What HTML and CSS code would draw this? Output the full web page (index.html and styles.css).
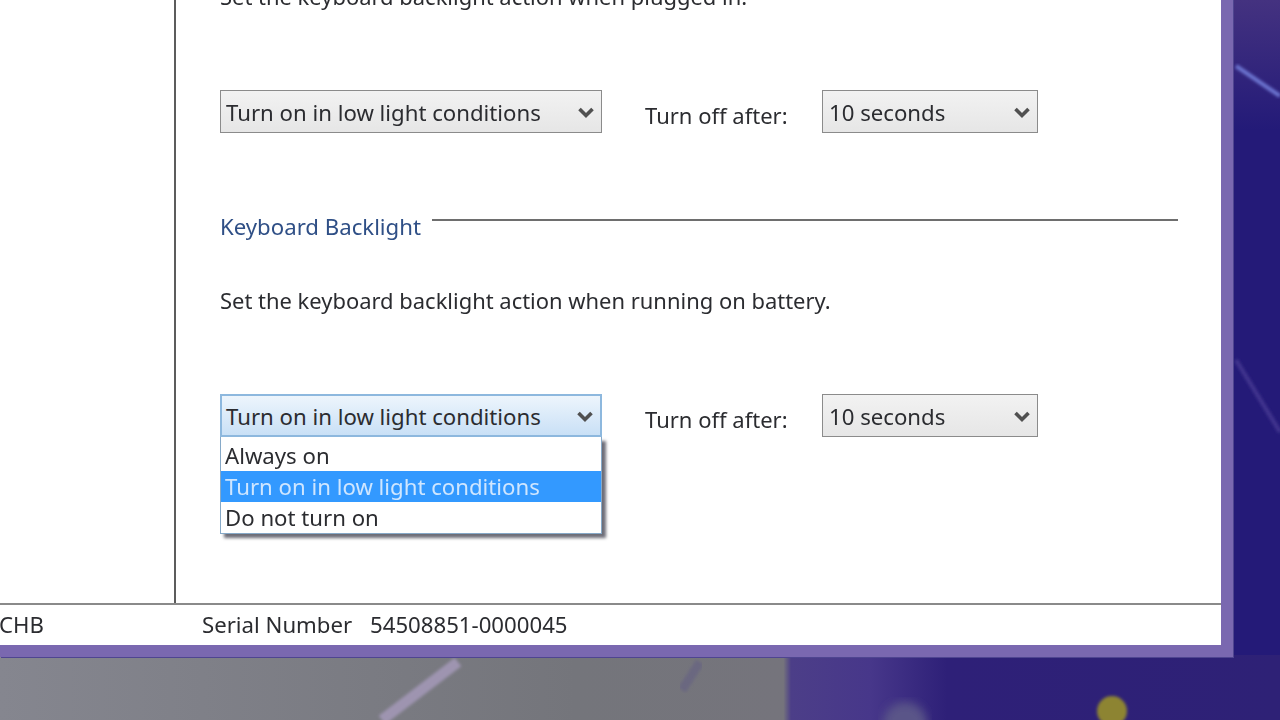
FILE: index.html
```html
<!DOCTYPE html>
<html lang="en">
<head>
<meta charset="utf-8">
<title>Keyboard Backlight</title>
<link rel="stylesheet" href="styles.css">
</head>
<body>
<div class="desktop">
  <svg class="wallpaper" width="1280" height="720" viewBox="0 0 1280 720" aria-hidden="true">
    <defs>
      <linearGradient id="skyFade" x1="0" y1="0" x2="0" y2="1">
        <stop offset="0" stop-color="#443280"/>
        <stop offset="1" stop-color="#231a78"/>
      </linearGradient>
      <linearGradient id="groundFade" x1="0" y1="0" x2="1" y2="0">
        <stop offset="0" stop-color="#85868f"/>
        <stop offset="0.45" stop-color="#74757b"/>
        <stop offset="0.612" stop-color="#75747c"/>
        <stop offset="0.618" stop-color="#4c3e88"/>
        <stop offset="0.68" stop-color="#47378a"/>
        <stop offset="0.74" stop-color="#2e2078"/>
        <stop offset="1" stop-color="#2e2176"/>
      </linearGradient>
      <filter id="soft"><feGaussianBlur stdDeviation="1.5"/></filter>
      <filter id="softer"><feGaussianBlur stdDeviation="5"/></filter>
    </defs>
    <rect x="1200" y="0" width="80" height="130" fill="url(#skyFade)"/>
    <rect x="0" y="655" width="1280" height="65" fill="url(#groundFade)"/>
    <path d="M1236 66 L1280 96" stroke="#6c74d0" stroke-width="4" filter="url(#soft)"/>
    <path d="M1236 360 L1280 432" stroke="#42368f" stroke-width="4" filter="url(#soft)"/>
    <path d="M458 662 L382 720" stroke="#9e94b0" stroke-width="11" filter="url(#soft)"/>
    <path d="M700 662 L682 690" stroke="#6b6880" stroke-width="9" filter="url(#soft)"/>
    <circle cx="1112" cy="711" r="15" fill="#8d8430" filter="url(#soft)"/>
    <circle cx="905" cy="724" r="22" fill="#5a5488" filter="url(#softer)"/>
  </svg>

  <section class="window">
    <div class="window-body">
      <aside class="sidebar"></aside>
      <main class="content">
        <p class="text">Set the keyboard backlight action when plugged in.</p>
        <div class="control-row">
          <div class="select select-wide"><span>Turn on in low light conditions</span><svg class="chevron" width="18" height="12" viewBox="0 0 18 12"><path d="M2.5 2 L9 8.5 L15.5 2" fill="none" stroke="#505050" stroke-width="3.6"/></svg></div>
          <span class="row-label">Turn off after:</span>
          <div class="select select-narrow"><span>10 seconds</span><svg class="chevron" width="18" height="12" viewBox="0 0 18 12"><path d="M2.5 2 L9 8.5 L15.5 2" fill="none" stroke="#505050" stroke-width="3.6"/></svg></div>
        </div>

        <div class="section-head">
          <h2 class="section-title">Keyboard Backlight</h2>
          <div class="section-rule"></div>
        </div>

        <p class="text text-spaced">Set the keyboard backlight action when running on battery.</p>
        <div class="control-row">
          <div class="select-wrap">
            <div class="select select-wide select-open"><span>Turn on in low light conditions</span><svg class="chevron" width="18" height="12" viewBox="0 0 18 12"><path d="M2.5 2 L9 8.5 L15.5 2" fill="none" stroke="#505050" stroke-width="3.6"/></svg></div>
            <ul class="dropdown">
              <li class="option">Always on</li>
              <li class="option option-selected">Turn on in low light conditions</li>
              <li class="option">Do not turn on</li>
            </ul>
          </div>
          <span class="row-label">Turn off after:</span>
          <div class="select select-narrow"><span>10 seconds</span><svg class="chevron" width="18" height="12" viewBox="0 0 18 12"><path d="M2.5 2 L9 8.5 L15.5 2" fill="none" stroke="#505050" stroke-width="3.6"/></svg></div>
        </div>
      </main>
    </div>
    <footer class="statusbar">
      <span class="model">CHB</span>
      <span class="serial-label">Serial Number</span>
      <span class="serial-value">54508851-0000045</span>
    </footer>
  </section>
</div>
</body>
</html>
```
FILE: styles.css
```css
* { box-sizing: border-box; }
html, body { margin: 0; padding: 0; }
body {
  width: 1280px;
  height: 720px;
  overflow: hidden;
  font-family: "Noto Sans", "Open Sans", "Liberation Sans", sans-serif;
  font-size: 22.2px;
  color: #2b2c30;
}
.desktop {
  position: relative;
  width: 1280px;
  height: 720px;
  overflow: hidden;
  background: #241a78;
}
.wallpaper { position: absolute; left: 0; top: 0; }
.window {
  position: absolute;
  left: 0;
  top: -40px;
  width: 1233px;
  height: 697px;
  display: flex;
  flex-direction: column;
  background: #fff;
  border-right: 12px solid #7a68b0;
  border-bottom: 12px solid #7a68b0;
  box-shadow: 1px 1px 0 #4f4590;
}
.window-body { flex: 1; display: flex; min-height: 0; filter: blur(0.35px); }
.sidebar { width: 176px; border-right: 2px solid #5c5c5c; }
.content { flex: 1; padding: 22px 43px 0 44px; }
.text { margin: 0; font-size: 21.95px; line-height: 30px; white-space: nowrap; }
.text-spaced { margin-top: 44px; }
.control-row { display: flex; align-items: center; margin-top: 78px; }
.select {
  height: 43px;
  display: flex;
  align-items: center;
  justify-content: space-between;
  padding: 1px 6px 0 5px;
  border: 1px solid #8b8b8b;
  background: linear-gradient(#f2f2f2, #e6e6e6);
  white-space: nowrap;
}
.select-wide { width: 382px; }
.select-narrow { width: 216px; padding-left: 6px; }
.select-open {
  border: 2px solid #8db8de;
  padding-left: 4px;
  background: linear-gradient(#edf5fc, #c9e0f6);
}
.chevron { flex: none; margin-top: 1px; }
.select-wrap { position: relative; }
.dropdown {
  position: absolute;
  left: 0;
  top: 43px;
  width: 382px;
  margin: 0;
  padding: 3px 0 0;
  list-style: none;
  background: #fff;
  border: 1px solid #86a9c8;
  border-top: 0;
  box-shadow: 4px 4px 3px #6e6e78;
}
.option { height: 31px; line-height: 31px; padding-left: 4px; white-space: nowrap; }
.option-selected { background: #3399ff; color: #cfe6ff; }
.row-label { width: 177px; margin-left: 43px; padding-top: 6px; font-size: 22px; white-space: nowrap; }
.section-head { display: flex; margin-top: 79px; height: 30px; }
.section-title { margin: 0; font-size: inherit; font-weight: 400; line-height: 30px; color: #2f4f86; white-space: nowrap; }
.section-rule { flex: 1; height: 2px; margin: 7px 0 0 11px; background: #6e6e6e; }
.statusbar {
  height: 42px;
  flex: none;
  display: flex;
  align-items: center;
  padding-bottom: 2px;
  border-top: 2px solid #8a8a8a;
  white-space: nowrap;
  filter: blur(0.35px);
}
.model { width: 203px; margin-left: -1px; }
.serial-label { width: 168px; }
```
